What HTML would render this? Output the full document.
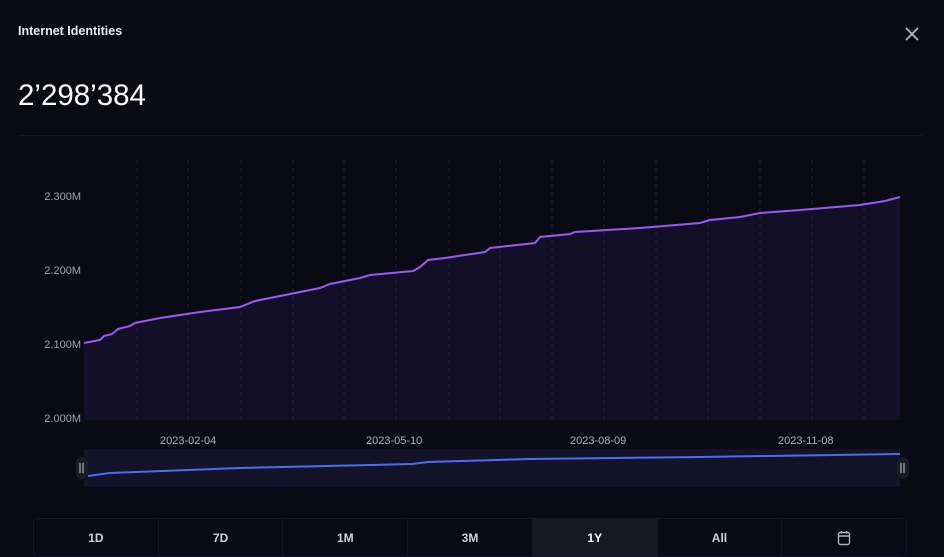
<!DOCTYPE html>
<html><head><meta charset="utf-8"><style>
body{margin:0;width:944px;height:557px;background:#0a0a14;font-family:"Liberation Sans",sans-serif;overflow:hidden;position:relative}
.t{position:absolute;left:18px;top:24px;color:#e8e8f0;font-size:12.5px;font-weight:bold}
.n{position:absolute;left:18px;top:79px;color:#fff;font-size:29.5px}
.x{position:absolute;left:904px;top:26px}
.hr{position:absolute;left:18px;top:135px;width:904px;height:1px;background:#16162a}
.yl{position:absolute;right:863px;color:#a0a0b0;font-size:11px}
.xl{position:absolute;top:435px;color:#b0b0bc;font-size:11px}
.btns{position:absolute;left:33px;top:518px;width:874px;height:39px;display:flex;border:1px solid #17172a;border-radius:5px;box-sizing:border-box}
.btns div{flex:1;border-right:1px solid #17172a;display:flex;align-items:center;justify-content:center;color:#d0d0dc;font-size:12px;font-weight:bold}
.btns div:last-child{border-right:none}
.btns .a{background:#181822;color:#fff}
</style></head><body>
<div class="t">Internet Identities</div>
<svg class="x" width="16" height="16" viewBox="0 0 16 16"><path d="M2 2L14 14M14 2L2 14" stroke="#c0c0c8" stroke-width="1.6"/></svg>
<div class="n">2’298’384</div>
<div class="hr"></div>
<svg style="position:absolute;left:0;top:0" width="944" height="500">
<path d="M84 343L100 340L104 336L112 334L118 329L130 326L135 323L160 318L200 312L240 307L255 301L265 299L290 294L320 288L330 284L360 278L370 275L413 271L420 267L428 260L445 258L485 252L490 248L535 243L540 237L570 234L575 232L640 228L700 223L710 220L740 217L760 213L800 210L860 205L885 201L900 197V420H84Z" fill="#140f28"/>
<g stroke="#231f3c" stroke-dasharray="4,4" stroke-width="1">
<path d="M137 160V420M188 160V420M241 160V420M293 160V420M344 160V420M396 160V420M449 160V420M500 160V420M552 160V420M604 160V420M656 160V420M708 160V420M760 160V420M812 160V420M864 160V420"/></g>
<path d="M84 343L100 340L104 336L112 334L118 329L130 326L135 323L160 318L200 312L240 307L255 301L265 299L290 294L320 288L330 284L360 278L370 275L413 271L420 267L428 260L445 258L485 252L490 248L535 243L540 237L570 234L575 232L640 228L700 223L710 220L740 217L760 213L800 210L860 205L885 201L900 197" fill="none" stroke="#9a5af0" stroke-width="2"/>
<rect x="84" y="449" width="816" height="38" fill="#141228"/>
<path d="M88 476L110 473L240 468L412 464L428 462L530 459L700 457L900 454" fill="none" stroke="#4a6cf0" stroke-width="2"/>
<rect x="76" y="457" width="12" height="22" rx="6" fill="#1c1c26"/>
<path d="M80 463V473M83 463V473" stroke="#c8c8d0" stroke-width="1"/>
<rect x="897" y="457" width="12" height="22" rx="6" fill="#1c1c26"/>
<path d="M901 463V473M904 463V473" stroke="#c8c8d0" stroke-width="1"/>
</svg>
<div class="yl" style="top:191px">2.300M</div>
<div class="yl" style="top:265px">2.200M</div>
<div class="yl" style="top:339px">2.100M</div>
<div class="yl" style="top:413px">2.000M</div>
<div class="xl" style="left:160px">2023-02-04</div>
<div class="xl" style="left:366px">2023-05-10</div>
<div class="xl" style="left:570px">2023-08-09</div>
<div class="xl" style="left:778px">2023-11-08</div>
<div class="btns"><div>1D</div><div>7D</div><div>1M</div><div>3M</div><div class="a">1Y</div><div>All</div><div><svg width="14" height="16" viewBox="0 0 14 16"><rect x="1.5" y="2.5" width="11" height="12" rx="2" fill="none" stroke="#b0b0bc" stroke-width="1.4"/><path d="M1.5 6H12.5M4.5 1V3.5M9.5 1V3.5" stroke="#b0b0bc" stroke-width="1.4"/></svg></div></div>
</body></html>
